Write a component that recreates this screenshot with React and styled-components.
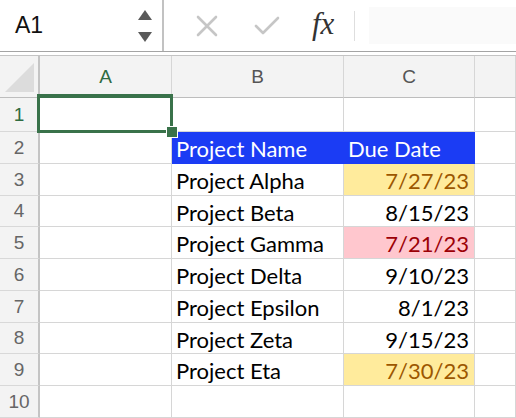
import React from "react";
import styled, { createGlobalStyle } from "styled-components";

const GlobalStyle = createGlobalStyle`
  html, body {
    margin: 0;
    padding: 0;
    background: #fff;
    overflow: hidden;
  }
`;

const Page = styled.div`
  width: 516px;
  height: 418px;
  overflow: hidden;
  display: flex;
  flex-direction: column;
`;

const FormulaBar = styled.div`
  height: 51px;
  display: flex;
  align-items: stretch;
  border-bottom: 1px solid #a4a4a4;
`;

const NameBox = styled.div`
  width: 164px;
  border-right: 2px solid #c2c2c2;
  display: flex;
  align-items: center;
  justify-content: space-between;
  padding: 0 10px 0 15px;
  box-sizing: border-box;
  font-family: "Liberation Sans", Arial, sans-serif;
  font-size: 23px;
  color: #111;
`;

const Spinner = styled.div`
  display: flex;
  flex-direction: column;
  gap: 12px;
`;

const Arrow = styled.div`
  width: 0;
  height: 0;
  border-left: 7px solid transparent;
  border-right: 7px solid transparent;
  ${(p) =>
    p.up
      ? "border-bottom: 10px solid #5a5a5a;"
      : "border-top: 10px solid #5a5a5a;"}
`;

const Tools = styled.div`
  flex: 1;
  display: flex;
  align-items: center;
  padding-left: 32px;
`;

const ToolIcon = styled.div`
  width: 58px;
  display: flex;
  align-items: center;
  justify-content: flex-start;
`;

const Fx = styled.div`
  font-family: "Liberation Serif", "Times New Roman", serif;
  font-style: italic;
  font-size: 31px;
  color: #333;
  width: 42px;
  margin-top: -3px;
`;

const Divider = styled.div`
  width: 1px;
  height: 30px;
  background: #dedede;
`;

const FormulaInput = styled.div`
  flex: 1;
  align-self: stretch;
  margin: 7px 0 7px 14px;
  background: #fafafa;
`;

const Gap = styled.div`
  height: 3px;
  background: #fff;
  border-bottom: 1px solid #c4c4c4;
`;

const Sheet = styled.div`
  display: grid;
  grid-template-columns: 40px 132px 172px 131px 1fr;
  grid-template-rows: 42px 34px 32px 32px 31px 32px 32px 32px 31px 32px 32px;
`;

const HeaderBase = styled.div`
  background: #f3f3f3;
  font-family: "Liberation Sans", Arial, sans-serif;
  display: flex;
  align-items: center;
  justify-content: center;
  box-sizing: border-box;
`;

const Corner = styled(HeaderBase)`
  border-right: 2px solid #c4c4c4;
  border-bottom: 1px solid #bdbdbd;
  align-items: flex-end;
  justify-content: flex-end;
  padding: 0 4px 5px 0;
`;

const Triangle = styled.div`
  width: 0;
  height: 0;
  border-left: 29px solid transparent;
  border-bottom: 29px solid #dcdcdc;
`;

const ColHeader = styled(HeaderBase)`
  font-size: 19px;
  color: ${(p) => (p.selected ? "#2f6b41" : "#555")};
  border-right: 1px solid #d6d6d6;
  border-bottom: ${(p) => (p.selected ? "3px solid #39724a" : "1px solid #bdbdbd")};
  padding-top: ${(p) => (p.selected ? "2px" : "0")};
`;

const RowHeader = styled(HeaderBase)`
  font-size: 19px;
  color: ${(p) => (p.selected ? "#2f6b41" : "#666")};
  border-right: 2px solid ${(p) => (p.selected ? "#39724a" : "#c4c4c4")};
  border-bottom: 1px solid #d8d8d8;
`;

const Cell = styled.div`
  position: relative;
  box-sizing: border-box;
  border-right: 1px solid ${(p) => p.$edge || "#d6d6d6"};
  border-bottom: 1px solid ${(p) => p.$edge || "#d6d6d6"};
  background: ${(p) => p.$fill || "#fff"};
  color: ${(p) => p.$ink || "#000"};
  font-family: Lato, "Open Sans", sans-serif;
  font-size: 22px;
  display: flex;
  align-items: center;
  justify-content: ${(p) => (p.$right ? "flex-end" : "flex-start")};
  padding: 2px 5px 0 4px;
  white-space: nowrap;
`;

const Selection = styled.div`
  position: absolute;
  z-index: 2;
  left: -3px;
  top: -4px;
  right: -2px;
  bottom: -2px;
  border: 3px solid #39724a;
  pointer-events: none;
`;

const Handle = styled.div`
  position: absolute;
  right: -8px;
  bottom: -8px;
  width: 10px;
  height: 10px;
  background: #39724a;
  border: 1px solid #fff;
`;

const BLUE = "#1b3cf4";
const NEUTRAL = { $fill: "#ffeb9c", $ink: "#9c5700" };
const BAD = { $fill: "#ffc7ce", $ink: "#9c0006" };

const rows = [
  null,
  { name: "Project Name", date: "Due Date", header: true },
  { name: "Project Alpha", date: "7/27/23", tone: NEUTRAL },
  { name: "Project Beta", date: "8/15/23" },
  { name: "Project Gamma", date: "7/21/23", tone: BAD },
  { name: "Project Delta", date: "9/10/23" },
  { name: "Project Epsilon", date: "8/1/23" },
  { name: "Project Zeta", date: "9/15/23" },
  { name: "Project Eta", date: "7/30/23", tone: NEUTRAL },
  null,
];

const XIcon = () => (
  <svg width="22" height="22" viewBox="0 0 22 22">
    <path d="M2 2 L20 20 M20 2 L2 20" stroke="#c6c6c6" strokeWidth="2.6" strokeLinecap="round" />
  </svg>
);

const CheckIcon = () => (
  <svg width="26" height="20" viewBox="0 0 26 20">
    <path d="M2 10 L9 17 L24 2" fill="none" stroke="#c6c6c6" strokeWidth="2.6" strokeLinecap="round" strokeLinejoin="round" />
  </svg>
);

export default function App() {
  return (
    <Page>
      <GlobalStyle />
      <FormulaBar>
        <NameBox>
          <span>A1</span>
          <Spinner>
            <Arrow up />
            <Arrow />
          </Spinner>
        </NameBox>
        <Tools>
          <ToolIcon>
            <XIcon />
          </ToolIcon>
          <ToolIcon>
            <CheckIcon />
          </ToolIcon>
          <Fx>fx</Fx>
          <Divider />
          <FormulaInput />
        </Tools>
      </FormulaBar>
      <Gap />
      <Sheet>
        <Corner>
          <Triangle />
        </Corner>
        <ColHeader selected>A</ColHeader>
        <ColHeader>B</ColHeader>
        <ColHeader>C</ColHeader>
        <ColHeader />
        {rows.map((row, i) => {
          const n = i + 1;
          const head = row && row.header;
          const blue = head ? { $fill: BLUE, $ink: "#fff", $edge: BLUE } : {};
          const tone = (row && row.tone) || {};
          return (
            <React.Fragment key={n}>
              <RowHeader selected={n === 1}>{n}</RowHeader>
              <Cell>
                {n === 1 && (
                  <Selection>
                    <Handle />
                  </Selection>
                )}
              </Cell>
              <Cell {...blue}>{row ? row.name : ""}</Cell>
              <Cell {...blue} {...tone} $right={!head}>
                {row ? row.date : ""}
              </Cell>
              <Cell />
            </React.Fragment>
          );
        })}
      </Sheet>
    </Page>
  );
}
